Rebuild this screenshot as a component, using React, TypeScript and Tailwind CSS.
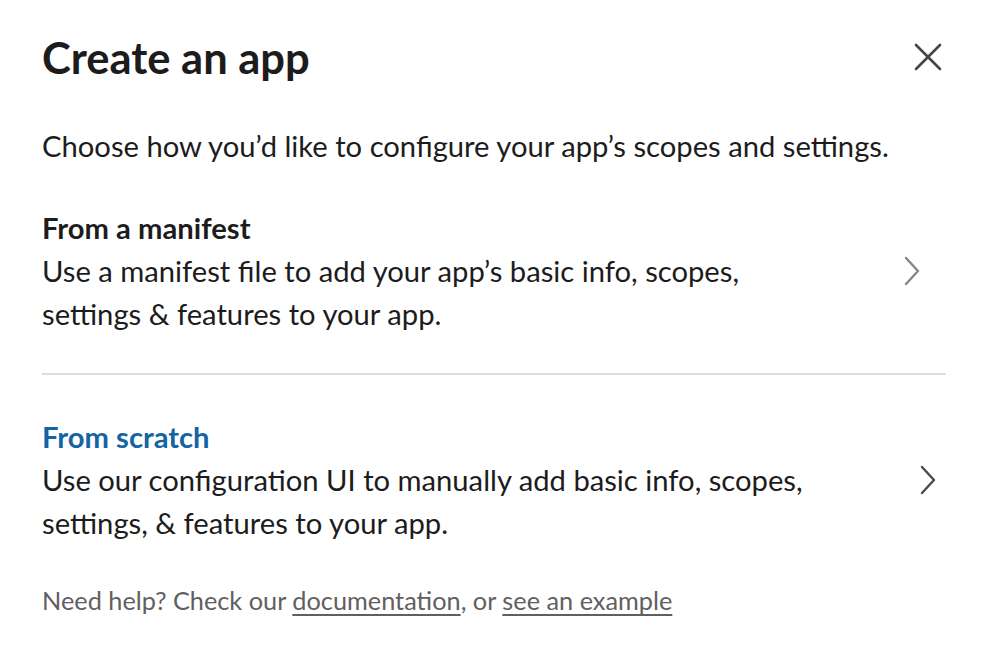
function Chevron({ className }: { className: string }) {
  return (
    <svg viewBox="0 0 16 30" className={className} fill="none" stroke="currentColor" strokeWidth={2.4} strokeLinecap="round" strokeLinejoin="round">
      <path d="M2 2 L14 15 L2 28" />
    </svg>
  );
}

export default function App() {
  return (
    <div className="w-[990px] h-[661px] bg-white text-[#1d1c1d] pl-[42px] pr-[44px] pt-[32px]" style={{ fontFamily: 'Lato, "Noto Sans", sans-serif' }}>
      <div className="flex items-center justify-between">
        <h1 className="text-[43.5px] leading-[50px] font-bold">Create an app</h1>
        <button className="mr-[4px] text-[#454545]" aria-label="Close">
          <svg viewBox="0 0 28 28" className="w-[28px] h-[28px]" fill="none" stroke="currentColor" strokeWidth={2.6} strokeLinecap="round">
            <path d="M2 2 L26 26 M26 2 L2 26" />
          </svg>
        </button>
      </div>

      <p className="mt-[42px] text-[29.2px] leading-[43px]">Choose how you’d like to configure your app’s scopes and settings.</p>

      <div className="mt-[39px] flex items-center justify-between">
        <div className="text-[29.2px] leading-[43px]">
          <div className="font-bold">From a manifest</div>
          <div className="w-[760px]">Use a manifest file to add your app’s basic info, scopes, settings &amp; features to your app.</div>
        </div>
        <Chevron className="w-[16px] h-[30px] mr-[26px] text-[#868686]" />
      </div>

      <div className="mt-[38px] h-[2px] bg-[#dddddd]" />

      <div className="mt-[40px] flex items-center justify-between">
        <div className="text-[29.2px] leading-[43px]">
          <div className="font-bold text-[#1264a3]">From scratch</div>
          <div className="w-[800px]">Use our configuration UI to manually add basic info, scopes, settings, &amp; features to your app.</div>
        </div>
        <Chevron className="w-[16px] h-[30px] mr-[10px] text-[#4a4a4a]" />
      </div>

      <p className="mt-[38px] text-[25.3px] leading-[36px] text-[#616061]">
        Need help? Check our <a className="underline underline-offset-[4px]">documentation</a>, or{' '}
        <a className="underline underline-offset-[4px]">see an example</a>
      </p>
    </div>
  );
}
